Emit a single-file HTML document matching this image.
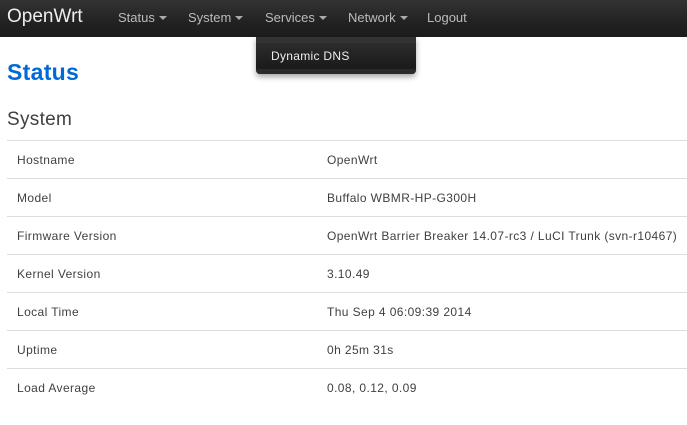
<!DOCTYPE html>
<html><head><style>
*{margin:0;padding:0;box-sizing:border-box}
body{width:687px;height:425px;overflow:hidden;background:#fff;font-family:"Liberation Sans",sans-serif;position:relative}
.nav{position:absolute;left:0;top:0;width:687px;height:37px;background:linear-gradient(#333,#222 60%,#1c1c1c);}
.brand{position:absolute;left:7px;top:6px;font-size:19px;color:#eee}
.m{position:absolute;top:10px;font-size:13px;color:#bbb}
.c{display:inline-block;width:0;height:0;border-left:4px solid transparent;border-right:4px solid transparent;border-top:4px solid #aaa;vertical-align:middle;margin-left:4px;margin-top:-2px}
.dd{position:absolute;left:256px;top:37px;width:160px;height:37px;background:#222;border-radius:0 0 4px 4px;box-shadow:0 3px 6px rgba(0,0,0,.35);overflow:hidden}
.dd .t{height:6px;background:#333}
.dd .i{height:26px;background:linear-gradient(#2c2c2c,#1a1a1a);color:#eee;font-size:12px;padding:6px 0 0 15px;letter-spacing:0.3px}
.dd .b{height:5px;background:#2a2a2a}
h1{position:absolute;left:7px;top:59px;font-size:23px;color:#0069d6;font-weight:bold;letter-spacing:0.3px}
h2{position:absolute;left:7px;top:109px;font-size:19px;color:#404040;font-weight:normal;letter-spacing:0.3px}
.row{position:absolute;left:7px;width:680px;height:38px;border-top:1px solid #ddd;font-size:12px;color:#404040;letter-spacing:0.4px}
.row span{position:absolute;top:12px;white-space:nowrap}
.row .a{left:10px}.row .v{left:320px}
</style></head><body>
<div class="nav">
<div class="brand">OpenWrt</div>
<div class="m" style="left:118px">Status<span class="c"></span></div>
<div class="m" style="left:188px">System<span class="c"></span></div>
<div class="m" style="left:265px">Services<span class="c"></span></div>
<div class="m" style="left:348px">Network<span class="c"></span></div>
<div class="m" style="left:427px">Logout</div>
</div>
<div class="dd"><div class="t"></div><div class="i">Dynamic DNS</div><div class="b"></div></div>
<h1>Status</h1>
<h2>System</h2>
<div class="row" style="top:140px"><span class="a">Hostname</span><span class="v">OpenWrt</span></div>
<div class="row" style="top:178px"><span class="a">Model</span><span class="v">Buffalo WBMR-HP-G300H</span></div>
<div class="row" style="top:216px"><span class="a">Firmware Version</span><span class="v">OpenWrt Barrier Breaker 14.07-rc3 / LuCI Trunk (svn-r10467)</span></div>
<div class="row" style="top:254px"><span class="a">Kernel Version</span><span class="v">3.10.49</span></div>
<div class="row" style="top:292px"><span class="a">Local Time</span><span class="v">Thu Sep 4 06:09:39 2014</span></div>
<div class="row" style="top:330px"><span class="a">Uptime</span><span class="v">0h 25m 31s</span></div>
<div class="row" style="top:368px"><span class="a">Load Average</span><span class="v">0.08, 0.12, 0.09</span></div>
</body></html>
